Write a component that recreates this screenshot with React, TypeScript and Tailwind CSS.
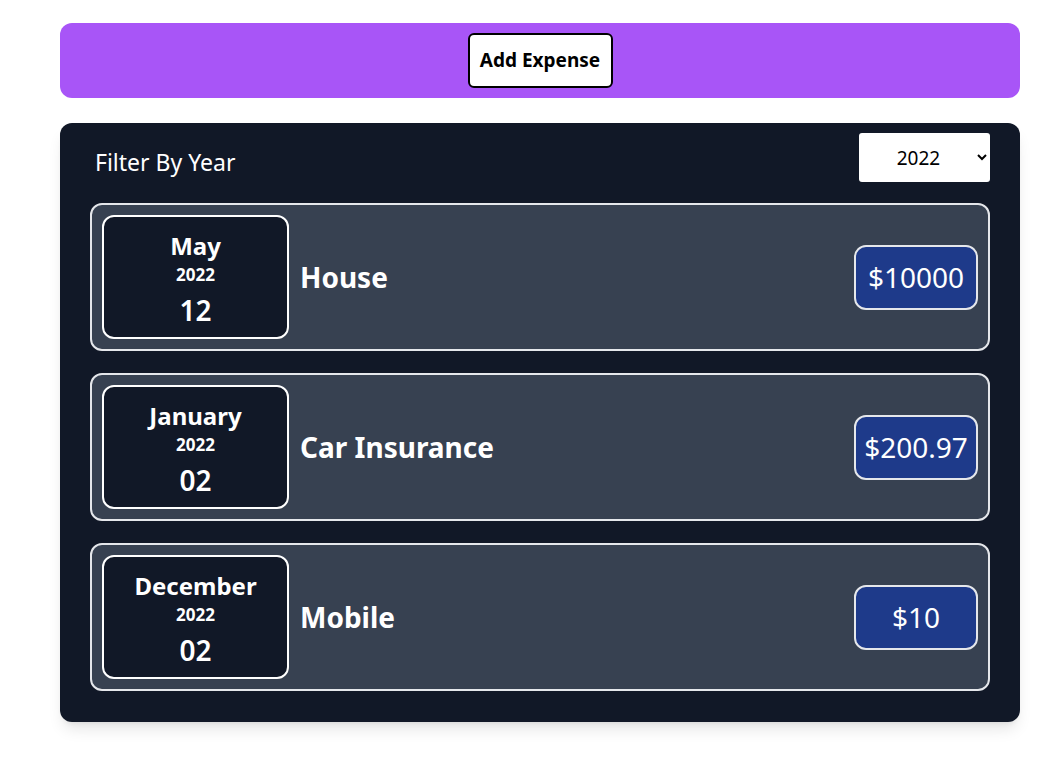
import React from "react";

interface Expense {
    id: string;
    month: string;
    year: string;
    day: string;
    title: string;
    amount: string;
}

const expenses: Expense[] = [
    { id: "e1", month: "May", year: "2022", day: "12", title: "House", amount: "$10000" },
    { id: "e2", month: "January", year: "2022", day: "02", title: "Car Insurance", amount: "$200.97" },
    { id: "e3", month: "December", year: "2022", day: "02", title: "Mobile", amount: "$10" },
];

function ExpenseDate({ month, year, day }: { month: string; year: string; day: string }) {
    return (
        <div className="w-[187px] h-[124px] shrink-0 flex flex-col items-center pt-[14px] bg-[#111827] border-2 border-white rounded-xl text-white">
            <div className="text-[24px] font-bold leading-[30px]">{month}</div>
            <div className="text-[17px] font-bold leading-[28px]">{year}</div>
            <div className="text-[28px] font-semibold leading-[42px]">{day}</div>
        </div>
    );
}

function ExpenseItem({ expense }: { expense: Expense }) {
    return (
        <div className="flex items-center p-[10px] bg-[#374151] border-2 border-[#e5e7eb] rounded-xl">
            <ExpenseDate month={expense.month} year={expense.year} day={expense.day} />
            <h2 className="flex-1 ml-[11px] text-[28px] font-bold text-white">{expense.title}</h2>
            <div className="w-[124px] h-[65px] flex items-center justify-center bg-[#1e3a8a] border-2 border-[#e5e7eb] rounded-xl text-[28px] text-white">
                {expense.amount}
            </div>
        </div>
    );
}

export default function App() {
    return (
        <div className="min-h-screen bg-white pt-[23px]" style={{ fontFamily: '"Noto Sans", "Open Sans", sans-serif' }}>
            {/* new expense */}
            <div className="ml-[60px] w-[960px] py-[10px] flex justify-center bg-[#a855f7] rounded-xl">
                <button className="w-[145px] h-[55px] bg-white border-2 border-black rounded-md text-[19px] font-bold text-black">
                    Add Expense
                </button>
            </div>

            {/* expenses */}
            <div className="ml-[60px] mt-[25px] w-[960px] px-[30px] pt-[10px] pb-[31px] bg-[#111827] rounded-xl shadow-lg">
                <div className="flex items-center justify-between mb-[21px]">
                    <label className="pl-[5px] pt-[10px] text-[23px] text-white">Filter By Year</label>
                    <select
                        defaultValue="2022"
                        className="w-[131px] h-[49px] bg-white rounded-[3px] text-[19px] text-black text-center"
                    >
                        <option value="2022">2022</option>
                        <option value="2021">2021</option>
                        <option value="2020">2020</option>
                        <option value="2019">2019</option>
                    </select>
                </div>
                <div className="flex flex-col gap-[22px]">
                    {expenses.map((expense) => (
                        <ExpenseItem key={expense.id} expense={expense} />
                    ))}
                </div>
            </div>
        </div>
    );
}
